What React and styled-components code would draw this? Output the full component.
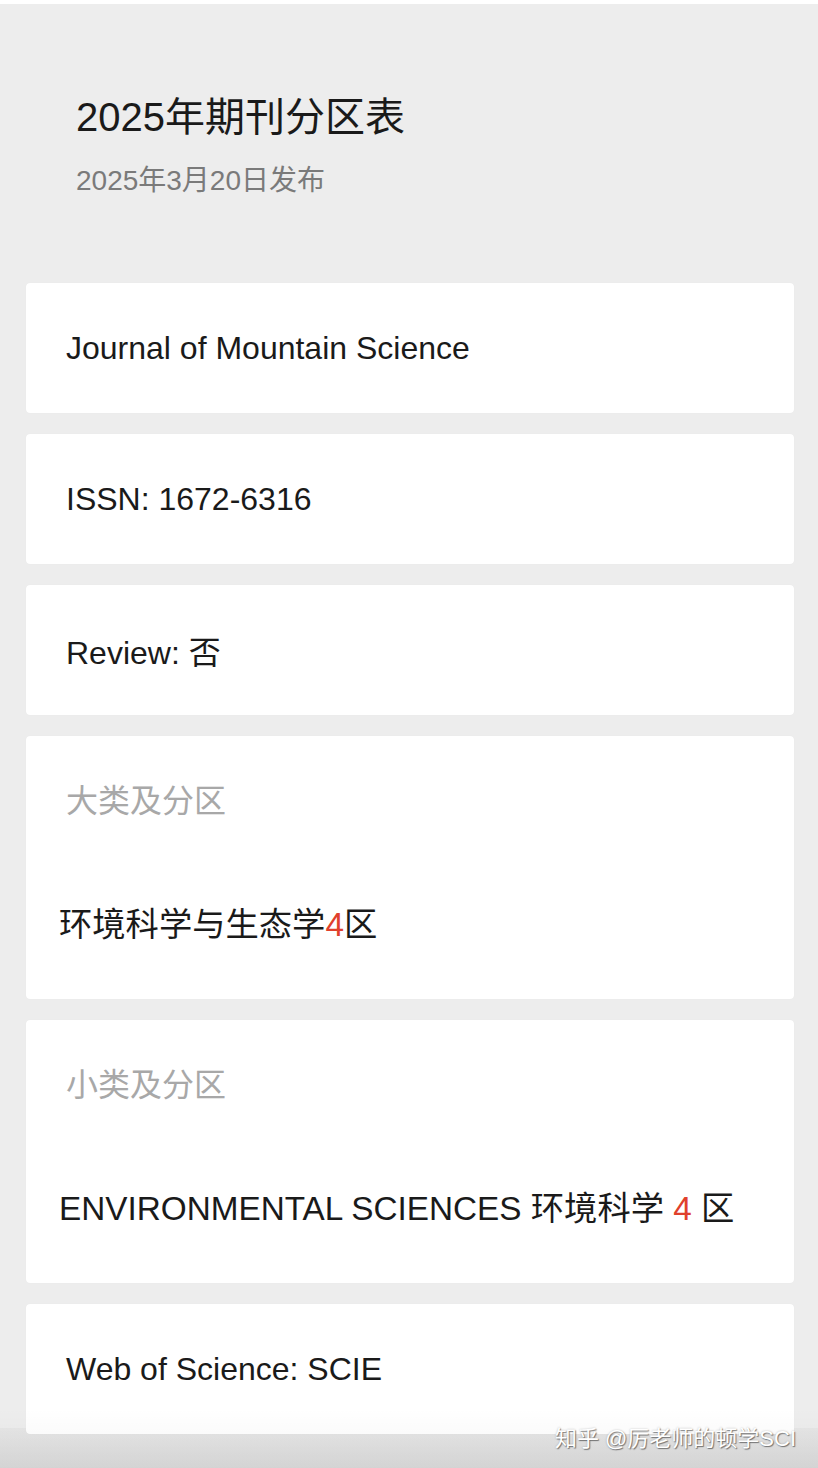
import React from "react";
import styled, { createGlobalStyle } from "styled-components";

const Global = createGlobalStyle`
  html, body { margin: 0; padding: 0; background: #ededed; }
  body { font-family: "Liberation Sans", "Noto Sans CJK SC", sans-serif; }
  * { box-sizing: border-box; }
`;

const Page = styled.div`
  position: relative;
  width: 818px;
  min-height: 1468px;
  border-top: 4px solid #ffffff;
  background: #ededed;
  overflow: hidden;
`;

const Header = styled.header`
  padding: 87px 76px 0;
`;

const Title = styled.h1`
  margin: 0;
  font-size: 40px;
  line-height: 52px;
  font-weight: 400;
  color: #1a1a1a;
`;

const Subtitle = styled.div`
  margin-top: 21px;
  font-size: 28px;
  line-height: 34px;
  color: #7a7a7a;
`;

const List = styled.div`
  display: flex;
  flex-direction: column;
  gap: 21px;
  margin-top: 85px;
  padding: 0 24px 0 26px;
`;

const Card = styled.div`
  background: #ffffff;
  border-radius: 4px;
  box-shadow: 0 0 1px rgba(0, 0, 0, 0.06);
`;

const SingleCard = styled(Card)`
  height: 130px;
  display: flex;
  align-items: center;
  padding: 0 40px;
  font-size: 32px;
  color: #1a1a1a;
`;

const CategoryCard = styled(Card)`
  height: 263px;
  display: flex;
  flex-direction: column;
  padding: 45px 33px 0;
`;

const Label = styled.div`
  padding-left: 7px;
  font-size: 32px;
  line-height: 40px;
  color: #a8a8a8;
`;

const Value = styled.div`
  margin-top: 84px;
  font-size: 33.3px;
  line-height: 40px;
  color: #1a1a1a;
  white-space: nowrap;
`;

const Red = styled.span`
  color: #e0402c;
`;

const Footer = styled.div`
  height: 40px;
  margin-top: -6px;
  background: linear-gradient(#e6e6e6, #dcdcdc);
`;

const Fade = styled.div`
  position: absolute;
  left: 0;
  right: 0;
  bottom: 0;
  height: 60px;
  background: linear-gradient(rgba(0, 0, 0, 0), rgba(0, 0, 0, 0.02) 50%, rgba(0, 0, 0, 0.04));
  pointer-events: none;
`;

const Watermark = styled.div`
  position: absolute;
  right: 22px;
  top: 1420px;
  font-size: 22px;
  line-height: 30px;
  color: #ffffff;
  text-shadow: 1px 1px 1px rgba(0, 0, 0, 0.45), 0 0 2px rgba(0, 0, 0, 0.25);
  white-space: nowrap;
`;

export default function App() {
  return (
    <>
      <Global />
      <Page>
        <Header>
          <Title>2025年期刊分区表</Title>
          <Subtitle>2025年3月20日发布</Subtitle>
        </Header>
        <List>
          <SingleCard>Journal of Mountain Science</SingleCard>
          <SingleCard>ISSN: 1672-6316</SingleCard>
          <SingleCard>Review: 否</SingleCard>
          <CategoryCard>
            <Label>大类及分区</Label>
            <Value>
              环境科学与生态学<Red>4</Red>区
            </Value>
          </CategoryCard>
          <CategoryCard>
            <Label>小类及分区</Label>
            <Value>
              ENVIRONMENTAL SCIENCES 环境科学 <Red>4</Red> 区
            </Value>
          </CategoryCard>
          <SingleCard>Web of Science: SCIE</SingleCard>
        </List>
        <Footer />
        <Fade />
        <Watermark>知乎 @厉老师的顿学SCI</Watermark>
      </Page>
    </>
  );
}
